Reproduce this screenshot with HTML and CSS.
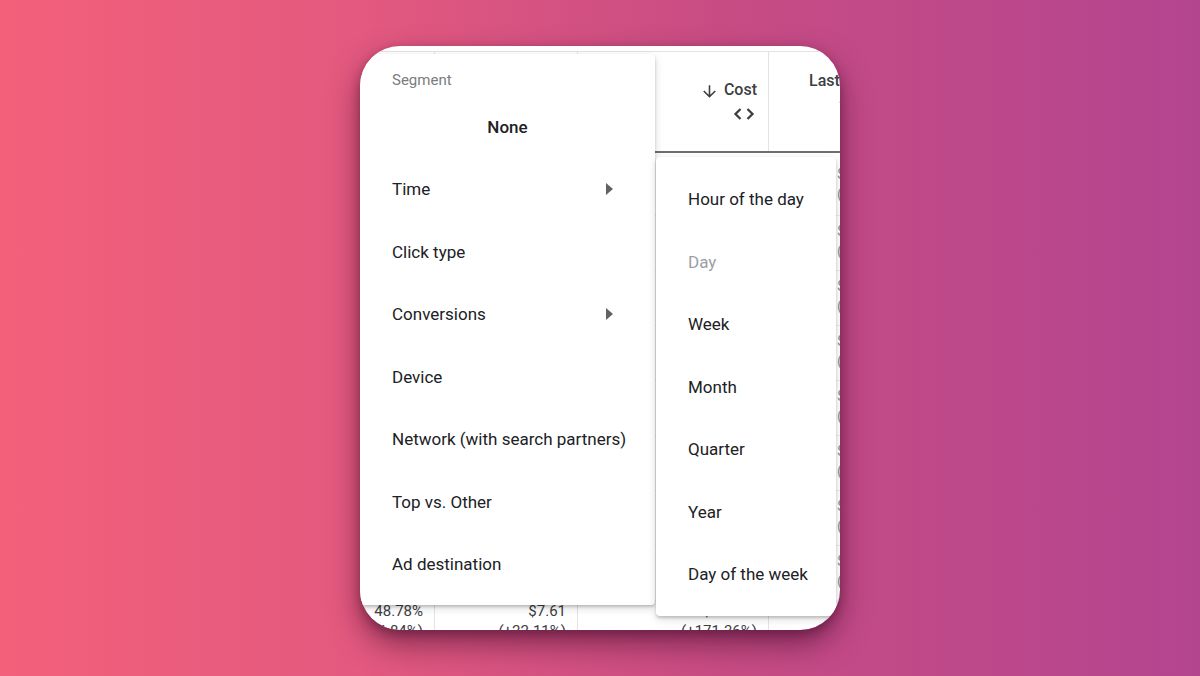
FILE: index.html
```html
<!DOCTYPE html>
<html>
<head>
<meta charset="utf-8">
<link rel="stylesheet" href="styles.css">
</head>
<body>
<div class="stage">
  <div class="card">
    <div class="table">
      <div class="thead">
        <div class="th c1"></div>
        <div class="th c2"></div>
        <div class="th c3">
          <div class="sort">
            <div class="sort-line">
              <svg class="arrow-down" viewBox="0 0 24 24" width="19" height="19"><path d="M20 12l-1.41-1.41L13 16.17V4h-2v12.17l-5.58-5.59L4 12l8 8 8-8z" fill="#3c4043"/></svg>
              <span>Cost</span>
            </div>
            <svg class="chev" viewBox="0 0 22 14" width="22" height="14"><path d="M7.5 2 L2.5 7 L7.5 12" fill="none" stroke="#3c4043" stroke-width="2.3"/><path d="M14.5 2 L19.5 7 L14.5 12" fill="none" stroke="#3c4043" stroke-width="2.3"/></svg>
          </div>
        </div>
        <div class="th c4">
          <div>Last period</div>
          <div class="ind">-</div>
          <div class="ind2">&nbsp;</div>
        </div>
      </div>
      <div class="row first">
        <div class="td c1"><div>52.10%</div><div>(+3.12%)</div></div>
        <div class="td c2"><div>$6.92</div><div>(+12.40%)</div></div>
        <div class="td c3"><div>$712.44</div><div>(+88.20%)</div></div>
        <div class="td c4"><div>$378.51</div><div>(+2.1%)</div></div>
      </div>
      <div class="row">
        <div class="td c1"><div>47.33%</div><div>(−1.05%)</div></div>
        <div class="td c2"><div>$7.15</div><div>(+9.87%)</div></div>
        <div class="td c3"><div>$640.12</div><div>(+64.01%)</div></div>
        <div class="td c4"><div>$390.22</div><div>(+4.5%)</div></div>
      </div>
      <div class="row">
        <div class="td c1"><div>50.02%</div><div>(+2.40%)</div></div>
        <div class="td c2"><div>$8.03</div><div>(+15.62%)</div></div>
        <div class="td c3"><div>$701.90</div><div>(+92.33%)</div></div>
        <div class="td c4"><div>$365.00</div><div>(+1.2%)</div></div>
      </div>
      <div class="row">
        <div class="td c1"><div>45.91%</div><div>(−2.77%)</div></div>
        <div class="td c2"><div>$6.48</div><div>(+5.10%)</div></div>
        <div class="td c3"><div>$598.36</div><div>(+40.18%)</div></div>
        <div class="td c4"><div>$426.80</div><div>(+6.3%)</div></div>
      </div>
      <div class="row">
        <div class="td c1"><div>49.64%</div><div>(+1.92%)</div></div>
        <div class="td c2"><div>$7.88</div><div>(+18.45%)</div></div>
        <div class="td c3"><div>$688.15</div><div>(+120.52%)</div></div>
        <div class="td c4"><div>$312.04</div><div>(+3.8%)</div></div>
      </div>
      <div class="row">
        <div class="td c1"><div>51.27%</div><div>(+4.06%)</div></div>
        <div class="td c2"><div>$7.02</div><div>(+11.93%)</div></div>
        <div class="td c3"><div>$655.48</div><div>(+97.70%)</div></div>
        <div class="td c4"><div>$331.46</div><div>(+2.9%)</div></div>
      </div>
      <div class="row">
        <div class="td c1"><div>46.85%</div><div>(−0.63%)</div></div>
        <div class="td c2"><div>$6.77</div><div>(+7.24%)</div></div>
        <div class="td c3"><div>$620.93</div><div>(+58.44%)</div></div>
        <div class="td c4"><div>$392.07</div><div>(+5.0%)</div></div>
      </div>
      <div class="row">
        <div class="td c1"><div>50.48%</div><div>(+2.95%)</div></div>
        <div class="td c2"><div>$7.40</div><div>(+14.06%)</div></div>
        <div class="td c3"><div>$673.21</div><div>(+133.80%)</div></div>
        <div class="td c4"><div>$287.93</div><div>(+1.7%)</div></div>
      </div>
      <div class="row last">
        <div class="td c1"><div>48.78%</div><div>(+4.84%)</div></div>
        <div class="td c2"><div>$7.61</div><div>(+22.11%)</div></div>
        <div class="td c3"><div>$669.70</div><div>(+171.36%)</div></div>
        <div class="td c4"><div>$246.93</div><div>(+3.4%)</div></div>
      </div>
    </div>

    <div class="menu">
      <div class="menu-title">Segment</div>
      <div class="menu-none">None</div>
      <div class="item"><span>Time</span><svg class="tri" viewBox="0 0 7 12" width="7" height="12"><path d="M0 0 L7 6 L0 12 Z" fill="#5f6368"/></svg></div>
      <div class="item"><span>Click type</span></div>
      <div class="item"><span>Conversions</span><svg class="tri" viewBox="0 0 7 12" width="7" height="12"><path d="M0 0 L7 6 L0 12 Z" fill="#5f6368"/></svg></div>
      <div class="item"><span>Device</span></div>
      <div class="item"><span>Network (with search partners)</span></div>
      <div class="item"><span>Top vs. Other</span></div>
      <div class="item"><span>Ad destination</span></div>
    </div>

    <div class="submenu">
      <div class="item">Hour of the day</div>
      <div class="item disabled">Day</div>
      <div class="item">Week</div>
      <div class="item">Month</div>
      <div class="item">Quarter</div>
      <div class="item">Year</div>
      <div class="item">Day of the week</div>
    </div>
  </div>
</div>
</body>
</html>
```

FILE: styles.css
```css
* { box-sizing: border-box; }

html, body {
  margin: 0;
  padding: 0;
}

body {
  width: 1200px;
  height: 676px;
  overflow: hidden;
  font-family: Roboto, "Noto Sans", Arial, sans-serif;
  background: linear-gradient(90deg, #f3607a 0%, #e3597f 30%, #c84c84 60%, #b3458f 100%);
}

.stage {
  height: 676px;
  display: flex;
  align-items: center;
  justify-content: center;
}

.card {
  position: relative;
  width: 480px;
  height: 584px;
  border-radius: 40px;
  overflow: hidden;
  background: #fff;
  box-shadow: 0 14px 30px rgba(60, 10, 40, 0.55), 0 4px 10px rgba(60, 10, 40, 0.35);
}

/* ---------- table behind ---------- */
.table {
  margin-top: 5px;
  width: 609px;
  border-top: 1px solid #e3e3e3;
  color: #3c4043;
  font-size: 15px;
  line-height: 20px;
}

.thead, .row {
  display: grid;
  grid-template-columns: 75px 143px 191px 200px;
}

.thead {
  height: 101px;
  border-bottom: 2px solid #6b7075;
}

.th {
  border-right: 1px solid #e3e3e3;
  font-weight: 500;
  color: #3c4043;
}

.th.c3 {
  display: flex;
  align-items: center;
  justify-content: flex-end;
  padding-right: 11px;
}

.sort {
  display: flex;
  flex-direction: column;
  align-items: flex-end;
  gap: 6px;
  margin-top: -3px;
}

.sort-line {
  display: flex;
  align-items: center;
  gap: 5px;
  font-size: 16px;
  line-height: 20px;
}

.arrow-down { display: block; margin-top: 2px; }

.chev { display: block; margin-right: 2px; }

.th.c4 {
  padding-left: 40px;
  display: flex;
  flex-direction: column;
  justify-content: center;
  line-height: 21px;
  font-size: 16px;
  white-space: nowrap;
}

.th.c4 .ind { padding-left: 30px; color: #9aa0a6; }

.row {
  height: 55px;
  border-bottom: 1px solid #ececec;
}

.row.first { height: 63px; padding-top: 6px; }

.row.last { border-bottom: none; }

.td {
  border-right: 1px solid #e3e3e3;
  text-align: right;
  padding: 0 11px 0 0;
  white-space: nowrap;
}

.td.c4 {
  text-align: left;
  padding-left: 68px;
  padding-top: 5px;
  color: #8a8e93;
}

/* ---------- menus ---------- */
.menu, .submenu {
  position: absolute;
  background: #fff;
  border-radius: 4px;
  box-shadow: 0 2px 3px rgba(0, 0, 0, 0.18), 0 3px 10px rgba(0, 0, 0, 0.14);
  color: #202124;
  font-size: 17px;
}

.menu {
  left: 0;
  top: 8px;
  width: 295px;
  height: 551px;
  padding-top: 16px;
  display: flex;
  flex-direction: column;
}

.menu-title {
  padding-left: 32px;
  font-size: 15px;
  line-height: 20px;
  color: #7a7d81;
}

.menu-none {
  margin-top: 27px;
  margin-bottom: 21px;
  text-align: center;
  font-weight: 500;
  line-height: 20px;
  color: #202124;
}

.item {
  height: 62.5px;
  display: flex;
  align-items: center;
  justify-content: space-between;
  padding: 0 42px 0 32px;
  line-height: 20px;
  white-space: nowrap;
}

.tri { display: block; }

.submenu {
  left: 296px;
  top: 111px;
  width: 180px;
  height: 459px;
  padding-top: 11px;
}

.submenu .item {
  padding: 0 0 0 32px;
  justify-content: flex-start;
}

.submenu .item.disabled { color: #9aa0a6; }
```
